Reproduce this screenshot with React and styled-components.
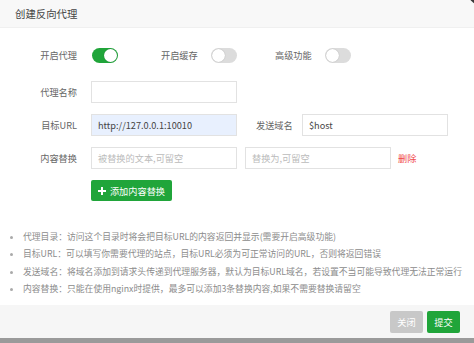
import React from "react";
import styled, { createGlobalStyle } from "styled-components";

const GlobalStyle = createGlobalStyle`
  html, body {
    margin: 0;
    padding: 0;
    background: #9a9a9a;
  }
  body {
    font-family: "Noto Sans CJK SC", "Noto Sans", sans-serif;
    overflow: hidden;
  }
`

const Dialog = styled.div`
  position: relative;
  width: 474px;
  height: 338px;
  background: #fff;
  display: flex;
  flex-direction: column;
  overflow: hidden;
`

const Close = styled.span`
  position: absolute;
  top: -26px;
  right: -25px;
  width: 32px;
  height: 32px;
  border-radius: 50%;
  background: #3a3a3a;
`

const Header = styled.div`
  height: 28px;
  padding-left: 15px;
  display: flex;
  align-items: center;
  background: #f8f8f8;
  border-bottom: 1px solid #f0f0f0;
  box-sizing: border-box;
  font-size: 10.4px;
  color: #444;
`

const Body = styled.div`
  flex: 1;
  padding-top: 16px;
`

const Row = styled.div`
  display: flex;
  align-items: center;
  height: 22px;
  margin-bottom: ${p => p.$gap || 11}px;
`

const Label = styled.span`
  width: ${p => p.$w || 77}px;
  margin-left: ${p => p.$ml || 0}px;
  margin-right: ${p => p.$mr || 14}px;
  text-align: right;
  font-size: 9.2px;
  color: #666;
  white-space: nowrap;
`

const Toggle = styled.span`
  position: relative;
  width: 26px;
  height: 15px;
  border-radius: 8px;
  box-sizing: border-box;
  margin-left: 1px;
  background: ${p => (p.$on ? "#20a53a" : "#dcdcdc")};
  &::after {
    content: "";
    position: absolute;
    top: 1px;
    left: ${p => (p.$on ? "12px" : "1px")};
    width: 13px;
    height: 13px;
    border-radius: 50%;
    background: #fff;
    box-shadow: 0 0 1px rgba(0, 0, 0, 0.3);
  }
`

const Input = styled.div`
  width: 146px;
  height: 22px;
  box-sizing: border-box;
  border: 1px solid #e2e2e2;
  background: ${p => (p.$filled ? "#e8f0fe" : "#fff")};
  padding-left: 6px;
  margin-right: ${p => p.$mr || 0}px;
  display: flex;
  align-items: center;
  font-size: 9.2px;
  color: ${p => (p.$placeholder ? "#bbb" : "#444")};
  white-space: nowrap;
`

const Delete = styled.span`
  margin-left: 7px;
  font-size: 9.2px;
  color: #f04848;
`

const AddButton = styled.div`
  margin-left: 91px;
  width: 81px;
  height: 21px;
  border-radius: 2px;
  background: #20a53a;
  color: #fff;
  font-size: 9.2px;
  display: flex;
  align-items: center;
  justify-content: center;
  gap: 4px;
`

const Tips = styled.ul`
  margin: 27px 0 0;
  padding: 0 0 0 23px;
  list-style: none;
`

const Tip = styled.li`
  position: relative;
  height: 17.3px;
  line-height: 17.3px;
  font-size: 8.8px;
  color: #8c8c8c;
  white-space: nowrap;
  &::before {
    content: "";
    position: absolute;
    left: -13px;
    top: 8px;
    width: 3px;
    height: 3px;
    border-radius: 50%;
    background: #aaa;
  }
`

const Footer = styled.div`
  height: 33px;
  background: #f6f6f6;
  display: flex;
  align-items: center;
  justify-content: flex-end;
  gap: 4px;
  padding-right: 14px;
`

const FootButton = styled.span`
  width: 33px;
  height: 22px;
  border-radius: 2px;
  display: flex;
  align-items: center;
  justify-content: center;
  font-size: 9.2px;
  color: #fff;
  background: ${p => (p.$primary ? "#20a53a" : "#c8c8c8")};
`

const Plus = () => (
  <svg width="8" height="8" viewBox="0 0 8 8">
    <path d="M3 0h2v3h3v2H5v3H3V5H0V3h3z" fill="#fff" />
  </svg>
)

export default () => {
  return (
    <>
      <GlobalStyle />
      <Dialog>
        <Close />
        <Header>创建反向代理</Header>
        <Body>
          <Row $gap={15}>
            <Label>开启代理</Label>
            <Toggle $on />
            <Label $w={35} $ml={43}>开启缓存</Label>
            <Toggle />
            <Label $w={35} $ml={38}>高级功能</Label>
            <Toggle />
          </Row>
          <Row>
            <Label>代理名称</Label>
            <Input />
          </Row>
          <Row>
            <Label>目标URL</Label>
            <Input $filled>http://127.0.0.1:10010</Input>
            <Label $w={34} $ml={19} $mr={12}>发送域名</Label>
            <Input>$host</Input>
          </Row>
          <Row>
            <Label>内容替换</Label>
            <Input $placeholder $mr={8}>被替换的文本,可留空</Input>
            <Input $placeholder>替换为,可留空</Input>
            <Delete>删除</Delete>
          </Row>
          <AddButton>
            <Plus />
            添加内容替换
          </AddButton>
          <Tips>
            <Tip>代理目录：访问这个目录时将会把目标URL的内容返回并显示(需要开启高级功能)</Tip>
            <Tip>目标URL：可以填写你需要代理的站点，目标URL必须为可正常访问的URL，否则将返回错误</Tip>
            <Tip>发送域名：将域名添加到请求头传递到代理服务器，默认为目标URL域名，若设置不当可能导致代理无法正常运行</Tip>
            <Tip>内容替换：只能在使用nginx时提供，最多可以添加3条替换内容,如果不需要替换请留空</Tip>
          </Tips>
        </Body>
        <Footer>
          <FootButton>关闭</FootButton>
          <FootButton $primary>提交</FootButton>
        </Footer>
      </Dialog>
    </>
  );
};
